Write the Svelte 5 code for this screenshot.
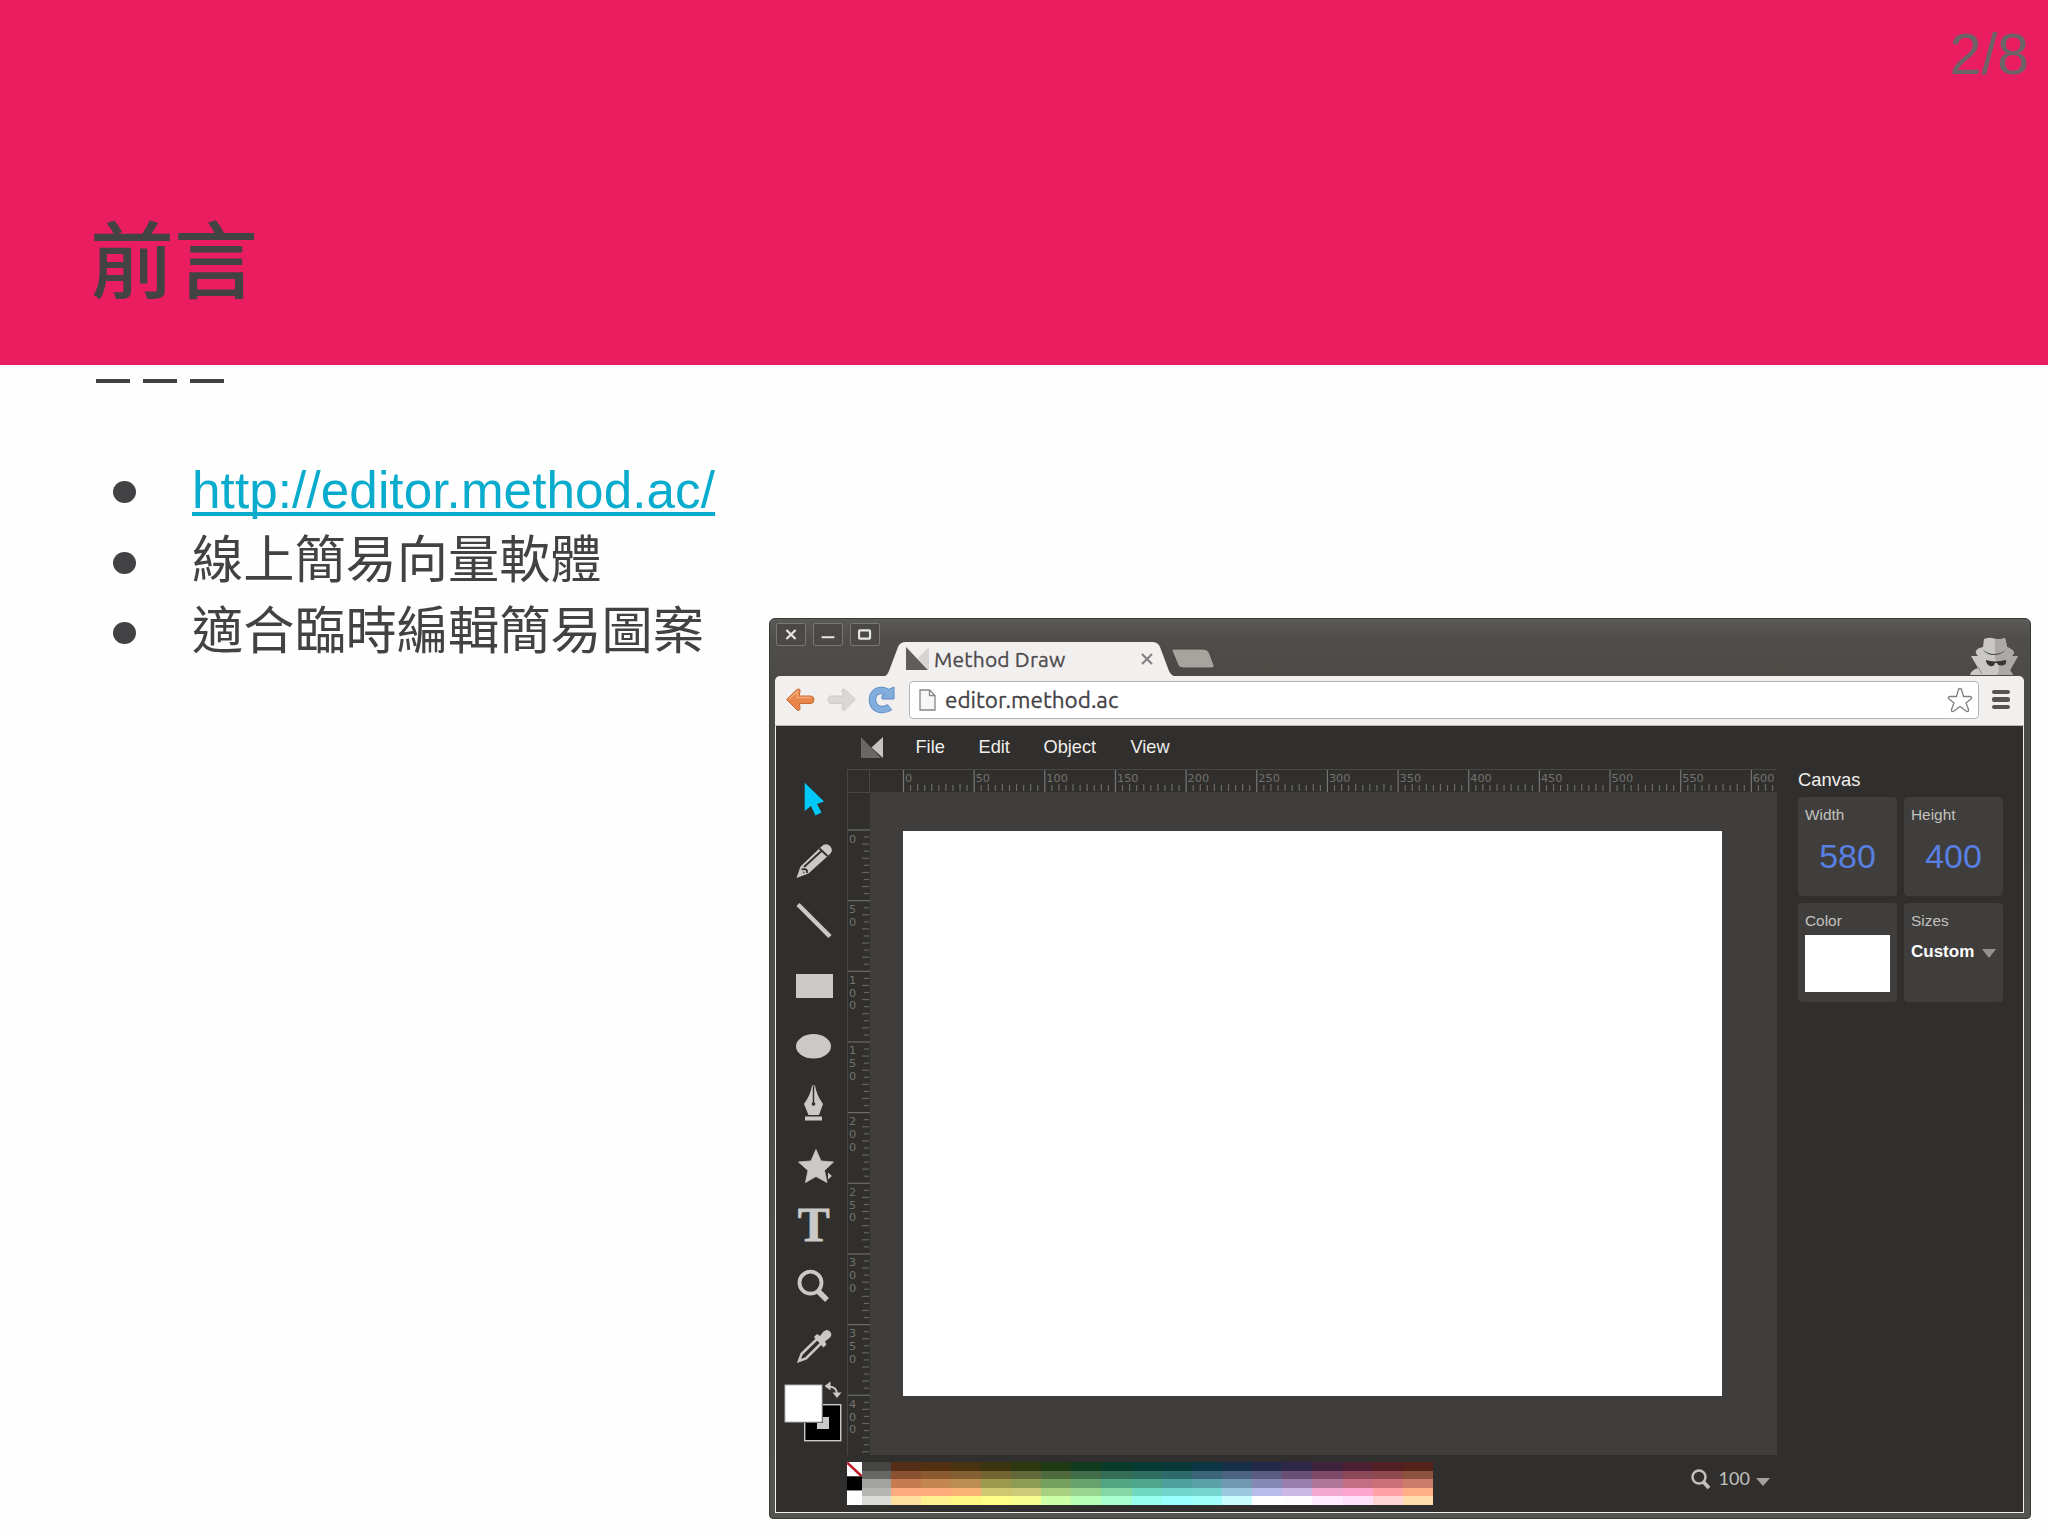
<script>
  const points = ['線上簡易向量軟體', '適合臨時編輯簡易圖案'];
  const menus = [
    { name: 'File', width: 63 },
    { name: 'Edit', width: 65 },
    { name: 'Object', width: 87 },
    { name: 'View', width: 60 }
  ];

  // pixels per canvas unit
  const SCALE = 1.4131;
  const H_ORIGIN = 56.5;
  const V_ORIGIN = 38;

  function makeTicks(origin, start, end) {
    const ticks = [];
    for (let v = 0; origin + v * SCALE < end; v += 5) {
      const pos = origin + v * SCALE;
      if (pos < start) continue;
      ticks.push({ value: v, pos, major: v % 50 === 0, odd: v % 10 !== 0 });
    }
    return ticks;
  }

  const hTicks = makeTicks(H_ORIGIN, 0, 929);
  const vTicks = makeTicks(V_ORIGIN, 0, 663);

  const palette = [
    ['#454644', '#552c18', '#53300f', '#48320f', '#3a340f', '#2c380f', '#1e3a14', '#123b1e', '#0a3b2a', '#063b34', '#083838', '#0c3644', '#162f46', '#24294a', '#2f2748', '#3f223c', '#4c2032', '#521e24', '#54221a'],
    ['#676766', '#8b5232', '#8b5a30', '#846034', '#736432', '#62683a', '#4f6b3e', '#416e48', '#346e56', '#2e6d60', '#2c6a6c', '#3a6478', '#4a6480', '#5c5c80', '#6a4f74', '#7c4a66', '#8a4858', '#90494c', '#8c5240'],
    ['#a3a3a2', '#c67c50', '#c48650', '#bd8d52', '#9c9a4c', '#8d9c52', '#76a05e', '#66a36c', '#52a583', '#4da58c', '#4ea09e', '#5ca0a8', '#7098b0', '#8488b4', '#9a7eae', '#b07498', '#c46e84', '#cc7078', '#cc7c6a'],
    ['#b5b5b4', '#ffab80', '#ffac7c', '#fbb074', '#d0c870', '#cccc78', '#a8d080', '#98d690', '#84d8a4', '#70d8c0', '#72d4cc', '#78d4d0', '#9cc8e0', '#b8bcea', '#ccb8e4', '#f0a8d0', '#ffa4cc', '#ffa2a8', '#ffae88'],
    ['#dadad9', '#ffdfa0', '#fff090', '#fff884', '#ffff88', '#f6ff90', '#ccffa8', '#b8ffb8', '#a8ffd0', '#98ffee', '#9cffff', '#a0fffb', '#c8fcff', '#ffffff', '#fffcff', '#ffeaff', '#ffe0fa', '#ffd4d4', '#ffdcac']
  ];
</script>

<div class="slide">
  <header>
    <div class="page">2/8</div>
    <h1>前言</h1>
  </header>
  <div class="dashes"><i></i><i></i><i></i></div>

  <main>
    <ul>
      <li><a href="http://editor.method.ac/">http://editor.method.ac/</a></li>
      {#each points as point}
        <li>{point}</li>
      {/each}
    </ul>

    <div class="window">
      <div class="titlebar">
        <div class="win-buttons">
          <svg width="30" height="23" viewBox="0 0 30 23"><path d="M10 6.5l10 10M20 6.5l-10 10" /></svg>
          <svg width="30" height="23" viewBox="0 0 30 23"><path d="M8 14.5h14" /></svg>
          <svg width="30" height="23" viewBox="0 0 30 23"><rect x="8.5" y="7" width="12" height="9" rx="1" /></svg>
        </div>
        <div class="tab">
          <svg class="tab-shape" width="294" height="35" viewBox="0 0 294 35">
            <path d="M0 35Q4 34 6 29L15 5Q17 0 23 0H269Q275 0 277 5L286 29Q288 34 294 35Z" fill="#f2f0ef" />
          </svg>
          <svg class="favicon" width="23" height="23" viewBox="0 0 23 23">
            <path d="M0 0L22 23H0Z" fill="#5e5d5c" />
            <path d="M23 0V23L11.500 11.500Z" fill="#d5d4d2" />
          </svg>
          <span>Method Draw</span>
          <svg class="tab-close" width="12" height="12" viewBox="0 0 12 12"><path d="M1 1l10 10M11 1L1 11" stroke="#858381" stroke-width="2.200" /></svg>
        </div>
        <svg class="new-tab" width="44" height="21" viewBox="0 0 44 21">
          <path d="M3 1H32Q37 1 38.500 5L43 17Q44 20 40 20H12Q8 20 7 17L1.500 4Q0 1 3 1Z" fill="#a5a49f" stroke="#44433f" />
        </svg>
        <svg class="incognito" width="48" height="38" viewBox="0 0 48 38">
          <path d="M14 2Q20 0 24 1.500Q30 3 35 1L37 10Q44 13 44 16L42 19L48 19L40 33L43 38H0Q1 33 8 31L1 19L8 19Q5 16 6 14Q7 11 13 10Z" fill="#c9c8c6" />
          <path d="M25 2Q30 3 35 1L37 10Q44 13 44 16L42 19L48 19L40 33L43 38H27Q32 30 25 22Z" fill="#aaa9a7" />
          <path d="M13 13Q24 21 36 13Q31 18 24 18Q17 18 13 13Z" fill="#4a4944" />
          <path d="M16 23Q20 24 25 24.500Q31 24 36 23Q37 28 32 28.500Q28 29 27 26H25Q24 30 20 29Q16 27 16 23Z" fill="#373633" />
          <path d="M8 30L12 37" stroke="#8c8b88" />
        </svg>
      </div>

      <div class="toolbar">
        <svg width="30" height="26" viewBox="0 0 30 26">
          <path d="M1.500 12.500L12 2.500Q15.500 1 15 4.500L14 9H26Q29 9.500 29 12.500Q29 16 26 16.500H14.500L15 21Q15 24.500 12 23Z" fill="#e8854a" stroke="#c66a35" />
          <path d="M4 12L12.500 4.500L12 10.500H26" fill="none" stroke="#f3ac7a" stroke-width="1.500" />
        </svg>
        <svg width="30" height="26" viewBox="0 0 30 26">
          <path d="M28.500 12.500L18 2.500Q14.500 1 15 4.500L16 9H3Q1 9.500 1 12.500Q1 16 3 16.500H15.500L15 21Q15 24.500 18 23Z" fill="#d9d8d6" stroke="#cfcecc" />
        </svg>
        <svg class="reload" width="28" height="28" viewBox="0 0 28 28">
          <path d="M22 21Q18 24 13.500 23.500C7 23 4.500 18.500 4.500 13.500C4.500 8 8.500 4.500 13.500 4.500Q17.500 4.500 20 7" fill="none" stroke="#5d89bf" stroke-width="7.500" />
          <path d="M26 1V13H14V9.500L18 8L20.500 3.500Z" fill="#82addd" stroke="#5d89bf" />
          <path d="M22 21Q18 24 13.500 23.500C7 23 4.500 18.500 4.500 13.500C4.500 8 8.500 4.500 13.500 4.500Q17.500 4.500 21 7.500" fill="none" stroke="#82addd" stroke-width="5.800" />
        </svg>
        <div class="address">
          <svg width="17" height="22" viewBox="0 0 17 22">
            <path d="M1 1H10.500L16 6.500V21H1ZM10.500 1V6.500H16" fill="#f7f7f7" stroke="#888786" stroke-width="1.300" />
          </svg>
          <span>editor.method.ac</span>
          <svg class="bookmark" width="26" height="26" viewBox="0 0 26 26">
            <path d="M13 1.500Q14.500 1.500 15 4L16.500 9.500H22.500Q26 10 24 12L19 16L21.500 22.500Q22 25.500 19 24L13 19.500L7 24Q4 25.500 4.500 22.500L7 16L2 12Q0 10 3.500 9.500H9.500L11 4Q11.500 1.500 13 1.500Z" fill="#fff" stroke="#807f7e" stroke-width="1.300" />
          </svg>
        </div>
        <div class="burger"><i></i><i></i><i></i></div>
      </div>

      <div class="editor">
        <nav>
          <svg class="logo" width="22" height="21" viewBox="0 0 22 21">
            <path d="M0 0L20 21H0Z" fill="#696867" />
            <path d="M22 0V21L10.500 10.500Z" fill="#c6c5c3" />
          </svg>
          {#each menus as menu}
            <span style="width: {menu.width}px">{menu.name}</span>
          {/each}
        </nav>

        <div class="workspace">
          <div class="tools">
            <svg viewBox="0 0 71 60.700"><path d="M28.700 13.700V42L35 37L39.500 46.500L45.500 43.500L41 35L48 32.500Z" fill="#00c8f8" /></svg>
            <svg viewBox="0 0 71 60.700">
              <path d="M20.500 48L24.500 36.500L45.500 16.500Q50 12 54.500 16.500Q57.500 20.500 54 24L32.500 43.500Z" />
              <path d="M25.500 39.500Q32 38 31 43M28 37L46 20.500M43.500 18.500L51.500 26" fill="none" stroke="#2f2e2b" stroke-width="1.800" />
              <path d="M26.500 41L28.500 42.500L28 44Z" fill="#2f2e2b" />
            </svg>
            <svg viewBox="0 0 71 60.700"><path d="M22 14.500L54 46.500" stroke="#cac9c7" stroke-width="4.500" /></svg>
            <svg viewBox="0 0 71 60.700"><rect x="20" y="23" width="37" height="24" /></svg>
            <svg viewBox="0 0 71 60.700"><ellipse cx="37.500" cy="34.300" rx="17.500" ry="12.200" /></svg>
            <svg viewBox="0 0 71 60.700">
              <path d="M36 13.500H39Q40.500 23 47 32L43 43H32.500L28 32Q34.500 23 36 13.500ZM29 44.500H46V48.500H29Z" />
              <path d="M37.500 14V31" stroke="#2f2e2b" stroke-width="1.400" />
              <circle cx="37.500" cy="32" r="1.800" fill="#2f2e2b" />
            </svg>
            <svg viewBox="0 0 71 60.700">
              <path d="M40 16.500L45 28L57.500 29L48.500 37.500L51 49.500L40 43.500L29.500 49.500L32 37.500L22.500 29L35 28Z" stroke="#cac9c7" stroke-width="0.800" />
              <path d="M51.500 38.500L56.500 43L51.500 47.500Z" stroke="#2f2e2b" />
            </svg>
            <svg viewBox="0 0 71 60.700"><text x="37.700" y="47.300">T</text></svg>
            <svg viewBox="0 0 71 60.700">
              <circle cx="34.500" cy="27.700" r="11" fill="none" stroke="#cac9c7" stroke-width="3.800" />
              <path d="M41.500 35.500L51 45" stroke="#cac9c7" stroke-width="5.500" />
            </svg>
            <svg viewBox="0 0 71 60.700">
              <path d="M41 24L25.500 39L23 46L30 43.500L45.500 28" fill="none" stroke="#cac9c7" stroke-width="2.500" />
              <path d="M38 22L41 19L44 21L47.500 16.500Q51 13.500 54 16.500Q57 20 53.500 23L49 26.500L50.500 29.500L47.500 32.500Z" />
            </svg>
            <svg class="swatches" viewBox="0 0 71 75">
              <rect x="28.700" y="28.700" width="36" height="36" fill="#000" stroke="#cac9c7" stroke-width="1.400" />
              <rect x="41" y="41" width="12" height="12" />
              <rect x="8" y="8" width="39" height="39" fill="#2f2e2b" />
              <rect x="9" y="9" width="37" height="37" fill="#fff" stroke="#b3b2b0" />
              <path d="M53 10.500Q61 11 61 18" fill="none" stroke="#cac9c7" stroke-width="2" />
              <path d="M48.500 10L54.500 5.500V14.500ZM61 22L56.500 16.500H65.500Z" />
            </svg>
          </div>

          <div class="stage">
            <svg class="ruler-h" width="930" height="23" viewBox="0 0 930 23">
              <path d="M0 0.500H930M0.500 0V23M22.500 0V23" stroke="#484744" />
              {#each hTicks as t}
                <path d="M{t.pos} {t.major ? 1 : t.odd ? 16 : 15}V{t.major ? 23 : 22}" stroke={t.major ? '#777674' : '#6b6a67'} stroke-width="1.200" />
                {#if t.major}
                  <text x={t.pos + 1.5} y="12.500">{t.value}</text>
                {/if}
              {/each}
            </svg>
            <div class="stage-row">
              <svg class="ruler-v" width="23" height="663" viewBox="0 0 23 663">
                <path d="M0.500 0V663M0 0.500H23" stroke="#484744" />
                {#each vTicks as t}
                  <path d="M{t.major ? 1 : t.odd ? 17 : 15} {t.pos}H{t.major ? 23 : 22}" stroke={t.major ? '#6e6d6a' : '#656461'} stroke-width="1.200" />
                  {#if t.major}
                    {#each String(t.value) as digit, i}
                      <text x="2" y={t.pos + 12.5 + i * 12.8}>{digit}</text>
                    {/each}
                  {/if}
                {/each}
              </svg>
              <div class="canvas-area"><div class="canvas"></div></div>
            </div>
          </div>

          <aside>
            <h2>Canvas</h2>
            <div class="cards">
              <div class="card">Width<b class="num">580</b></div>
              <div class="card">Height<b class="num">400</b></div>
              <div class="card">Color<div class="color"></div></div>
              <div class="card">
                Sizes
                <div class="select">
                  <b>Custom</b>
                  <svg width="14" height="9" viewBox="0 0 14 9"><path d="M0 0H14L7 9Z" fill="#92918e" /></svg>
                </div>
              </div>
            </div>
          </aside>
        </div>

        <footer>
          <svg class="base-colors" width="15" height="43" viewBox="0 0 15 43">
            <rect width="15" height="14.500" fill="#fff" />
            <path d="M0 0.500L14.500 14" stroke="#bd1d2a" stroke-width="2.600" />
            <rect y="14.500" width="15" height="14" fill="#000" />
            <rect y="28.500" width="15" height="14.500" fill="#fff" />
          </svg>
          <div class="palette">
            {#each palette as row}
              {#each row as color}
                <i style="background: {color}"></i>
              {/each}
            {/each}
          </div>
          <div class="zoom">
            <svg width="20" height="21" viewBox="0 0 20 21">
              <circle cx="8" cy="8" r="6.500" fill="none" stroke="#c2c1bf" stroke-width="2.500" />
              <path d="M12 12.500L18 19" stroke="#c2c1bf" stroke-width="3.800" />
            </svg>
            <span>100</span>
            <svg class="drop" width="14" height="8" viewBox="0 0 14 8"><path d="M0 0H14L7 8Z" fill="#a3a2a0" /></svg>
          </div>
        </footer>
      </div>
    </div>
  </main>
</div>

<style>
  :global(body) {
    margin: 0;
    background: #fefefe;
  }

  * {
    box-sizing: border-box;
  }

  svg {
    display: block;
    flex: none;
  }

  .slide {
    display: flex;
    flex-direction: column;
    width: 2048px;
    height: 1536px;
    overflow: hidden;
    background: #fefefe;
    color: #424143;
    font-family: "Liberation Sans", "Noto Sans CJK TC", sans-serif;
  }

  header {
    height: 364.5px;
    flex: none;
    background: #eb1d61;
  }

  .page {
    height: 108px;
    padding-right: 19px;
    font-size: 57px;
    line-height: 108px;
    text-align: right;
    color: #6d6468;
  }

  h1 {
    margin: 90px 0 0 90px;
    font-size: 84px;
    font-weight: 500;
    line-height: 130px;
    color: #444343;
  }

  .dashes {
    display: flex;
    flex: none;
    gap: 13px;
    height: 19.5px;
    padding: 14px 0 0 96px;
  }

  .dashes i {
    width: 34px;
    height: 4.5px;
    background: #424143;
  }

  main {
    display: flex;
    flex: 1;
  }

  ul {
    width: 769px;
    margin: 0;
    padding: 72px 0 0 113px;
    list-style: none;
    flex: none;
  }

  li {
    display: flex;
    align-items: center;
    height: 70.4px;
    font-size: 51.2px;
    line-height: 70.4px;
    white-space: nowrap;
  }

  li::before {
    content: "";
    width: 23px;
    height: 22px;
    margin: 2px 56px 0 0;
    border-radius: 50%;
    background: #424143;
  }

  a {
    color: #0aaccd;
    letter-spacing: 0.1px;
    text-decoration-thickness: 4px;
    text-underline-offset: 4px;
    text-decoration-skip-ink: none;
  }

  .window {
    display: flex;
    flex-direction: column;
    width: 1262px;
    height: 901px;
    margin-top: 234px;
    padding: 0 6px 5px 5px;
    border: 1px solid #3a3936;
    border-radius: 6px 6px 4px 4px;
    background: linear-gradient(#5b5a58, #4f4e4a 20px, #4b4a45 58px, #53534f);
  }

  .titlebar {
    display: flex;
    height: 57px;
    flex: none;
  }

  .win-buttons {
    display: flex;
    gap: 7px;
    padding: 4px 0 0 1px;
  }

  .win-buttons svg {
    border: 1px solid #77766f;
    border-radius: 2px;
    background: #4a4945;
    fill: none;
    stroke: #e8e7e3;
    stroke-width: 2.4;
  }

  .tab {
    position: relative;
    display: flex;
    align-items: center;
    width: 294px;
    height: 35px;
    margin: 22px 0 0 3px;
    padding-left: 23px;
    font-family: Ubuntu, "Noto Sans", sans-serif;
    font-size: 21px;
    color: #4c4a4c;
    -webkit-text-stroke: 0.3px #4c4a4c;
  }

  .tab-shape {
    position: absolute;
    left: 0;
    top: 1px;
  }

  .favicon,
  .tab span,
  .tab-close {
    position: relative;
  }

  .tab span {
    width: 207px;
    margin-left: 5px;
    line-height: 30px;
    letter-spacing: 0.2px;
  }

  .new-tab {
    margin: 29px 0 0 -6px;
  }

  .incognito {
    margin: 18px 6px 0 auto;
  }

  .toolbar {
    display: flex;
    align-items: center;
    height: 50px;
    flex: none;
    padding: 0 14px 2px 10px;
    border-bottom: 1px solid #bab8b5;
    border-radius: 5px 5px 0 0;
    background: #f2f0ef;
  }

  .toolbar > svg + svg {
    margin-left: 11.5px;
  }

  .address {
    display: flex;
    align-items: center;
    flex: 1;
    height: 38px;
    margin-left: 13px;
    padding: 0 5px 0 9px;
    border: 1px solid #b9b7b5;
    border-radius: 4px;
    background: #fff;
    font-family: Ubuntu, "Noto Sans", sans-serif;
    font-size: 22.5px;
    color: #444247;
    -webkit-text-stroke: 0.3px #444247;
  }

  .address span {
    margin-left: 9px;
  }

  .bookmark {
    margin-left: auto;
  }

  .burger {
    display: flex;
    flex-direction: column;
    gap: 3px;
    margin-left: 13px;
  }

  .burger i {
    width: 18px;
    height: 4.5px;
    border-radius: 2px;
    background: #565553;
  }

  .editor {
    display: flex;
    flex-direction: column;
    flex: 1;
    border: 1px solid #f0efed;
    border-top: 0;
    background: #302f2d;
  }

  nav {
    display: flex;
    align-items: center;
    height: 43px;
    flex: none;
    padding-left: 85px;
    font-size: 18.2px;
    color: #efeeec;
  }

  .logo {
    margin-right: 32.5px;
  }

  .workspace {
    display: flex;
    height: 686px;
    flex: none;
  }

  .tools {
    display: flex;
    flex-direction: column;
    width: 71px;
    flex: none;
    fill: #cac9c7;
  }

  .tools svg {
    width: 71px;
    height: 60.7px;
  }

  .tools .swatches {
    height: 75px;
  }

  .tools text {
    font: bold 48px "Liberation Serif", serif;
    text-anchor: middle;
    stroke: #cac9c7;
    stroke-width: 0.8px;
  }

  .stage {
    width: 930px;
    flex: none;
    background: #3f3e3c;
  }

  .stage-row {
    display: flex;
  }

  .ruler-h,
  .ruler-v {
    background: #302f2d;
    font: 11.3px "DejaVu Sans", sans-serif;
    fill: #73726f;
  }

  .canvas-area {
    padding: 38.5px 0 0 33px;
  }

  .canvas {
    width: 819px;
    height: 565.5px;
    background: #fff;
  }

  aside {
    padding: 0 0 0 21px;
  }

  h2 {
    height: 28px;
    margin: 0;
    font-size: 18.4px;
    font-weight: normal;
    line-height: 22px;
    color: #f0efed;
  }

  .cards {
    display: grid;
    grid-template-columns: 99px 99px;
    gap: 7px;
  }

  .card {
    height: 99px;
    padding: 8px 7px;
    border-radius: 4px;
    background: #3f3e3c;
    font-size: 15.4px;
    line-height: 19px;
    color: #c2c1bf;
  }

  .num {
    display: block;
    margin-top: 14px;
    font-size: 34px;
    font-weight: normal;
    line-height: 36px;
    text-align: center;
    color: #587fe2;
  }

  .color {
    height: 56.5px;
    margin-top: 5px;
    background: #fff;
  }

  .select {
    display: flex;
    align-items: center;
    justify-content: space-between;
    margin-top: 11px;
    font-size: 17px;
    line-height: 22px;
    color: #fff;
  }

  .select svg {
    margin: 2px 0 0;
  }

  footer {
    display: flex;
    height: 50px;
    padding: 7px 0 0 70.5px;
  }

  .palette {
    display: grid;
    grid-template-columns: 29px repeat(18, 1fr);
    grid-template-rows: repeat(5, 1fr);
    width: 571.5px;
    height: 43px;
  }

  .zoom {
    display: flex;
    align-items: center;
    height: 32px;
    margin-left: 257.5px;
    font-family: Lato, sans-serif;
    font-size: 18px;
    color: #c2c1bf;
  }

  .zoom svg:first-child {
    margin-top: 2px;
  }

  .zoom span {
    width: 37px;
    margin-left: 8px;
  }

  .drop {
    margin-top: 8px;
  }
</style>
